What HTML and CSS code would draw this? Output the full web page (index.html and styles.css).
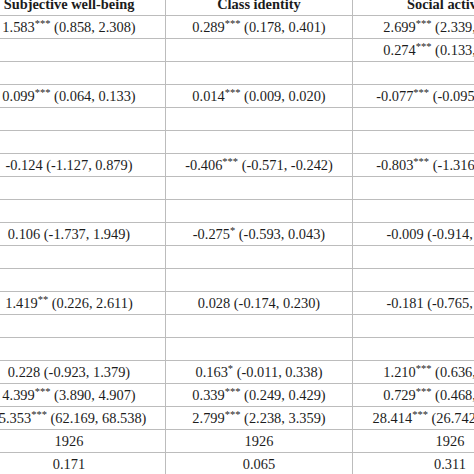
FILE: index.html
```html
<!DOCTYPE html>
<html>
<head>
<meta charset="utf-8">
<link rel="stylesheet" href="styles.css">
</head>
<body>
<div class="frame">
<table class="results">
<colgroup><col class="c1"><col class="c2"><col class="c3"></colgroup>
<thead>
<tr><th>Subjective well-being</th><th>Class identity</th><th>Social activity</th></tr>
</thead>
<tbody>
<tr><td>1.583<sup>***</sup> (0.858, 2.308)</td><td>0.289<sup>***</sup> (0.178, 0.401)</td><td>2.699<sup>***</sup> (2.339, 3.059)</td></tr>
<tr><td></td><td></td><td>0.274<sup>***</sup> (0.133, 0.415)</td></tr>
<tr><td></td><td></td><td></td></tr>
<tr><td>0.099<sup>***</sup> (0.064, 0.133)</td><td>0.014<sup>***</sup> (0.009, 0.020)</td><td>-0.077<sup>***</sup> (-0.095, -0.059)</td></tr>
<tr><td></td><td></td><td></td></tr>
<tr><td></td><td></td><td></td></tr>
<tr><td>-0.124 (-1.127, 0.879)</td><td>-0.406<sup>***</sup> (-0.571, -0.242)</td><td>-0.803<sup>***</sup> (-1.316, -0.290)</td></tr>
<tr><td></td><td></td><td></td></tr>
<tr><td></td><td></td><td></td></tr>
<tr><td>0.106 (-1.737, 1.949)</td><td>-0.275<sup>*</sup> (-0.593, 0.043)</td><td>-0.009 (-0.914, 0.896)</td></tr>
<tr><td></td><td></td><td></td></tr>
<tr><td></td><td></td><td></td></tr>
<tr><td>1.419<sup>**</sup> (0.226, 2.611)</td><td>0.028 (-0.174, 0.230)</td><td>-0.181 (-0.765, 0.403)</td></tr>
<tr><td></td><td></td><td></td></tr>
<tr><td></td><td></td><td></td></tr>
<tr><td>0.228 (-0.923, 1.379)</td><td>0.163<sup>*</sup> (-0.011, 0.338)</td><td>1.210<sup>***</sup> (0.636, 1.784)</td></tr>
<tr><td>4.399<sup>***</sup> (3.890, 4.907)</td><td>0.339<sup>***</sup> (0.249, 0.429)</td><td>0.729<sup>***</sup> (0.468, 0.990)</td></tr>
<tr><td>65.353<sup>***</sup> (62.169, 68.538)</td><td>2.799<sup>***</sup> (2.238, 3.359)</td><td>28.414<sup>***</sup> (26.742, 30.086)</td></tr>
<tr><td>1926</td><td>1926</td><td>1926</td></tr>
<tr><td>0.171</td><td>0.065</td><td>0.311</td></tr>
</tbody>
</table>
</div>
</body>
</html>
```
FILE: styles.css
```css
html, body {
  margin: 0;
  padding: 0;
  background: #fff;
}
.frame {
  width: 474px;
  height: 474px;
  overflow: hidden;
}
.results {
  border-collapse: collapse;
  width: 575px;
  margin-left: -28px;
  margin-top: -8px;
  font-family: "Liberation Serif", "Times New Roman", serif;
  font-size: 14.4px;
  color: #1c1c1c;
  table-layout: fixed;
}
.results .c1 { width: 193px; }
.results .c2 { width: 187px; }
.results .c3 { width: 195px; }
.results th, .results td {
  height: 22px;
  padding: 0;
  text-align: center;
  vertical-align: middle;
  white-space: nowrap;
  border: 1px solid #bcbcbc;
  line-height: 22px;
}
.results th {
  font-weight: bold;
}
.results sup {
  font-size: 10.5px;
  line-height: 0;
  vertical-align: 5px;
}
```
